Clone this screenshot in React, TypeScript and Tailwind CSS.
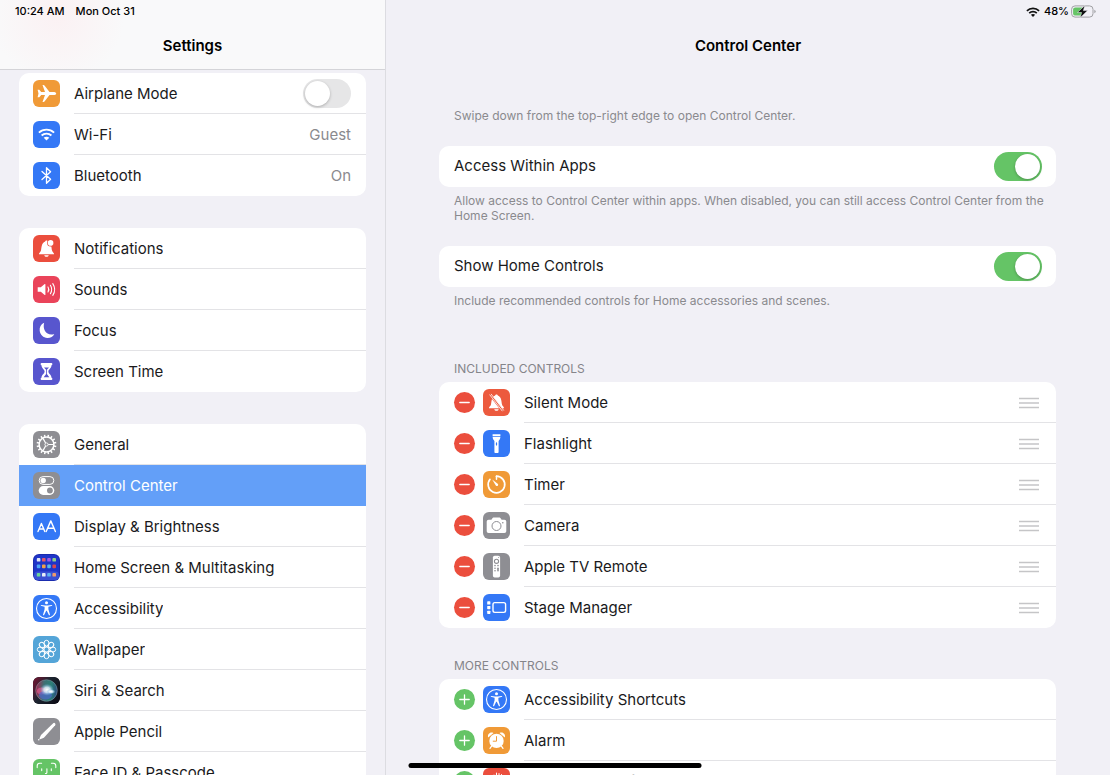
import { useId, useState, type ReactNode } from "react";
import clsx from "clsx";

/* Glyphs share a 27x27 box, the size of the coloured tile behind them */

const PERSON = (
  <>
    <circle cx="13.5" cy="13.5" r="10" fill="none" stroke="#fff" strokeWidth="1.1" />
    <circle cx="13.5" cy="7.7" r="1.5" />
    <path d="M8.3 9.9 L12.2 10.5 H14.8 L18.7 9.9 Q19.4 10 19.2 10.7 L15.4 11.7 V14.2 L17 19.8 Q16.7 20.6 16 20.2 L13.8 15.7 H13.2 L11 20.2 Q10.3 20.6 10 19.8 L11.6 14.2 V11.7 L7.8 10.7 Q7.6 10 8.3 9.9 Z" />
  </>
);

const BELL =
  "M6 19.3 C5.6 18.2 7.6 17.4 8 15.6 C8.6 13 8.2 8 12.2 6.5 C12.4 5.3 14.6 5.3 14.8 6.5 C18.8 8 18.4 13 19 15.6 C19.4 17.4 21.4 18.2 21 19.3 Z M11.3 20.2 H15.7 C15.4 22.3 11.6 22.3 11.3 20.2 Z";

const APP_COLORS = [
  "#dfe6f5", "#e0596c", "#a35bea", "#8fd08a",
  "#4ba5f5", "#f0a04a", "#5cb9e8", "#d8484f",
  "#6bd49a", "#e8eef8", "#5fb4f2", "#ef9a6b",
];

const ring = [0, 1, 2, 3, 4, 5, 6, 7];
const teeth = Array.from({ length: 16 }, (_, i) => i);

const GLYPHS = {
  airplane: (
    <path d="M23.2 13.5 C23.2 12.5 21.8 12 20.4 12 H16.5 L11.5 5.4 Q11.1 5 10.5 5 H9.5 L12 12 H8.2 L6.3 9.7 H4.6 L5.5 13.5 L4.6 17.3 H6.3 L8.2 15 H12 L9.5 22 H10.5 Q11.1 22 11.5 21.6 L16.5 15 H20.4 C21.8 15 23.2 14.5 23.2 13.5 Z" />
  ),
  wifi: (
    <>
      <g fill="none" stroke="#fff" strokeWidth="1.8">
        <path d="M5.9 11.6 C10.1 7.5 16.9 7.5 21.1 11.6" />
        <path d="M8.6 14.5 C11.3 11.9 15.7 11.9 18.4 14.5" />
      </g>
      <path d="M13.5 19.6 L10.7 16.8 C12.3 15.4 14.7 15.4 16.3 16.8 Z" />
    </>
  ),
  bluetooth: (
    <path d="M9 9.5 L17.6 17.3 L13.5 21.3 V5.7 L17.6 9.7 L9 17.5" fill="none" stroke="#fff" strokeWidth="1.3" strokeLinejoin="round" strokeLinecap="round" />
  ),
  bellBadge: (
    <>
      <path d={BELL} />
      <circle cx="17.6" cy="7.9" r="3.5" fill="#eb4e3d" />
      <circle cx="17.6" cy="7.9" r="2.8" />
    </>
  ),
  speaker: (
    <>
      <path d="M4.7 11.3 H7.8 L11.7 8 Q12.4 7.6 12.4 8.5 V18.5 Q12.4 19.4 11.7 19 L7.8 15.8 H4.7 Z" />
      <g fill="none" stroke="#fff" strokeWidth="1.1" strokeLinecap="round">
        <path d="M15 11 Q16.6 13.5 15 16" />
        <path d="M17.4 9.3 Q20 13.5 17.4 17.7" />
        <path d="M19.8 7.6 Q23.6 13.5 19.8 19.4" />
      </g>
    </>
  ),
  moon: <path d="M11.2 5.8 C7.9 7.2 6.3 10.4 6.7 13.8 C7.2 17.8 10.4 20.9 14.3 21 C17.5 21.1 20.1 19.5 21.3 16.9 C17.5 18.2 13.8 17 12 13.9 C10.6 11.5 10.4 8.6 11.2 5.8 Z" />,
  hourglass: (
    <>
      <path d="M8.5 5 H18.5 Q19.3 5 19.3 5.8 V6.5 Q19.3 7.2 18.5 7.2 C18.5 10.4 15.4 11.2 15.4 13.5 C15.4 15.8 18.5 16.6 18.5 19.8 Q19.3 19.8 19.3 20.5 V21.3 Q19.3 22 18.5 22 H8.5 Q7.7 22 7.7 21.3 V20.5 Q7.7 19.8 8.5 19.8 C8.5 16.6 11.6 15.8 11.6 13.5 C11.6 11.2 8.5 10.4 8.5 7.2 Q7.7 7.2 7.7 6.5 V5.8 Q7.7 5 8.5 5 Z" />
      <path d="M11 9.4 H16 L13.9 11.8 V16 L16.3 19.3 H10.7 L13.1 16 V11.8 Z" fill="#5856ce" />
    </>
  ),
  gear: (
    <g fill="none" stroke="#fff">
      <circle cx="13.5" cy="13.5" r="7.4" strokeWidth="1.5" />
      {teeth.map((i) => (
        <path key={i} d="M13.5 5.9 V3.6" strokeWidth="1.5" transform={`rotate(${i * 22.5 + 11} 13.5 13.5)`} />
      ))}
      <circle cx="13.5" cy="13.5" r="1.6" strokeWidth="0.9" />
      <path d="M15.2 13.5 H20.5 M12.6 12 L10 7.4 M12.6 15 L10 19.6" strokeWidth="1.2" />
    </g>
  ),
  toggles: (
    <>
      <rect x="6.2" y="4.6" width="14.6" height="7.8" rx="3.9" fill="none" stroke="#fff" strokeWidth="1" />
      <circle cx="10.2" cy="8.5" r="2.7" />
      <rect x="5.7" y="14.1" width="15.6" height="8.8" rx="4.4" />
      <circle cx="16.9" cy="18.5" r="2.9" fill="#8e8e93" />
    </>
  ),
  textSize: (
    <g fill="none" stroke="#fff" strokeWidth="1.4" strokeLinecap="round" strokeLinejoin="round">
      <path d="M5 18.5 L8.4 10.5 L11.8 18.5 M6.1 16 H10.7" />
      <path d="M13.2 18.5 L17.8 7.9 L22.4 18.5 M14.7 15.2 H20.9" />
    </g>
  ),
  appGrid: (
    <>
      <rect x="1" y="1" width="25" height="25" rx="5" fill="#1f35c8" />
      <rect x="1" y="17.6" width="25" height="8.4" rx="4" fill="#3a50d4" />
      {APP_COLORS.map((color, i) => (
        <rect key={i} x={3.8 + (i % 4) * 5.2} y={[4, 10.6, 19][Math.floor(i / 4)]} width="3.6" height="3.6" rx="0.9" fill={color} />
      ))}
    </>
  ),
  person: PERSON,
  flower: (
    <g fill="none" stroke="#fff" strokeWidth="1">
      {ring.map((i) => (
        <ellipse key={i} cx="13.5" cy="7.2" rx="2.5" ry="2.9" transform={`rotate(${i * 45} 13.5 13.5)`} />
      ))}
      <circle cx="13.5" cy="13.5" r="2.6" />
      {ring.map((i) => (
        <path key={i} d="M13.5 11.2 L12 8.8 M13.5 11.2 L15 8.8" strokeWidth="0.7" transform={`rotate(${i * 45} 13.5 13.5)`} />
      ))}
    </g>
  ),
  siri: (
    <>
      <defs>
        <linearGradient id="siri-back" x1="0" y1="0.2" x2="1" y2="0.8">
          <stop offset="0" stopColor="#6b1631" />
          <stop offset="0.4" stopColor="#1c2430" />
          <stop offset="1" stopColor="#0c0c16" />
        </linearGradient>
        <linearGradient id="siri-orb" x1="0" y1="0.5" x2="1" y2="0.6">
          <stop offset="0" stopColor="#a3284f" />
          <stop offset="0.35" stopColor="#3f6f73" />
          <stop offset="0.7" stopColor="#2b8078" />
          <stop offset="1" stopColor="#2c4a80" />
        </linearGradient>
        <radialGradient id="siri-glow">
          <stop offset="0" stopColor="#fff" />
          <stop offset="0.45" stopColor="#dcecf8" stopOpacity="0.85" />
          <stop offset="1" stopColor="#6fb0e6" stopOpacity="0" />
        </radialGradient>
      </defs>
      <rect width="27" height="27" rx="6" fill="url(#siri-back)" />
      <circle cx="13.5" cy="13.5" r="10.8" fill="url(#siri-orb)" stroke="#8a9cab" strokeWidth="0.5" />
      <ellipse cx="8.5" cy="14" rx="4.6" ry="3.6" fill="#e0588c" opacity="0.7" />
      <ellipse cx="12.5" cy="18.2" rx="6.5" ry="4.2" fill="#4d68cc" opacity="0.7" />
      <ellipse cx="14" cy="12.8" rx="7" ry="6" fill="url(#siri-glow)" />
      <ellipse cx="18" cy="14.6" rx="4.5" ry="2.6" fill="url(#siri-glow)" />
    </>
  ),
  pencil: (
    <>
      <path d="M20.2 5.2 Q21.1 4.5 22 5.2 Q22.9 6.2 22.2 7.3 L10.9 19.8 L7.2 21.3 L6.4 20.6 L8 16.9 Z" />
      <circle cx="5.8" cy="21.7" r="0.8" />
    </>
  ),
  face: (
    <g fill="none" stroke="#fff" strokeWidth="1.1" strokeLinecap="round">
      <path d="M4.2 8.6 V6.8 Q4.2 4.2 6.8 4.2 H8.6 M18.4 4.2 H20.2 Q22.8 4.2 22.8 6.8 V8.6 M22.8 18.4 V20.2 Q22.8 22.8 20.2 22.8 H18.4 M8.6 22.8 H6.8 Q4.2 22.8 4.2 20.2 V18.4" />
      <path d="M8.7 9.8 V11.6 M18.3 9.8 V11.6 M13.9 9.8 V13.6 Q13.9 14.6 12.4 14.5 M9.2 17.6 Q13.5 21 17.8 17.6" />
    </g>
  ),
  bellSlash: (
    <>
      <path d={BELL} />
      <path d="M6.8 5.2 L20.2 22.6" stroke="#ec5a3e" strokeWidth="2.4" />
      <path d="M8 4.9 L20.8 21.5 M6.6 5.6 L19.4 22.2" stroke="#fff" strokeWidth="0.8" />
    </>
  ),
  flashlight: (
    <>
      <path d="M9.6 4.3 H17.4 V6.2 H9.6 Z M9.6 6.9 H17.4 Q17.4 9.3 15.6 10.9 V22 Q15.6 22.9 14.8 22.9 H12.2 Q11.4 22.9 11.4 22 V10.9 Q9.6 9.3 9.6 6.9 Z" />
      <rect x="12.9" y="12.3" width="1.2" height="3.2" rx="0.6" fill="#3478f6" />
    </>
  ),
  timer: (
    <>
      <path d="M13.5 5.2 A8.3 8.3 0 1 1 7 8.3" fill="none" stroke="#fff" strokeWidth="1.7" strokeLinecap="round" />
      <path d="M13.5 5.2 V8.3" stroke="#fff" strokeWidth="1.5" strokeLinecap="round" />
      <path d="M9.2 8.5 L15 13 Q15.6 14.3 14.6 14.9 Q13.5 15.3 12.8 14.4 Z" />
    </>
  ),
  camera: (
    <>
      <path d="M5.6 7.8 H8.4 L9.6 5.9 Q9.8 5.6 10.3 5.6 H16.7 Q17.2 5.6 17.4 5.9 L18.6 7.8 H21.4 Q23.3 7.8 23.3 9.6 V19.3 Q23.3 21.1 21.4 21.1 H5.6 Q3.7 21.1 3.7 19.3 V9.6 Q3.7 7.8 5.6 7.8 Z" />
      <circle cx="13.5" cy="14" r="4.5" fill="none" stroke="#8e8e93" strokeWidth="1" />
      <circle cx="19.8" cy="10.7" r="0.8" fill="#8e8e93" />
    </>
  ),
  remote: (
    <>
      <rect x="9.9" y="2.8" width="7.2" height="21.8" rx="1.8" />
      <circle cx="13.5" cy="8.3" r="2.1" fill="none" stroke="#8e8e93" strokeWidth="1.1" />
      <g fill="#8e8e93">
        <circle cx="15.7" cy="4.5" r="0.5" />
        <circle cx="12" cy="12.6" r="0.8" />
        <circle cx="15" cy="12.6" r="0.8" />
        <circle cx="12" cy="15.2" r="0.8" />
        <circle cx="12" cy="17.8" r="0.8" />
        <rect x="14.2" y="14.4" width="1.6" height="4.2" rx="0.8" />
      </g>
    </>
  ),
  stage: (
    <>
      <rect x="4.2" y="7.3" width="3.2" height="3.2" rx="0.6" />
      <rect x="4.2" y="12" width="3.2" height="3.2" rx="0.6" />
      <rect x="4.2" y="16.7" width="3.2" height="3.2" rx="0.6" />
      <rect x="10" y="8.6" width="12.6" height="9.8" rx="1.8" fill="none" stroke="#fff" strokeWidth="1.4" />
    </>
  ),
  alarm: (
    <>
      <circle cx="13.5" cy="13.9" r="7.2" />
      <path d="M5.2 10.6 C4 7.2 7.4 4.4 10.5 6.1 Z M21.8 10.6 C23 7.2 19.6 4.4 16.5 6.1 Z" />
      <path d="M8.6 19.2 L7 21.3 M18.4 19.2 L20 21.3" stroke="#fff" strokeWidth="1.3" strokeLinecap="round" />
      <path d="M13.5 9.6 V14.2 H10.2" fill="none" stroke="#f09a37" strokeWidth="1" strokeLinecap="round" />
    </>
  ),
  announce: (
    <path d="M11 10 V7 M13.5 10 V5 M16 10 V5.5 M18.5 10 V6.5 M8 13 H19 M8 17 H19" fill="none" stroke="#fff" strokeWidth="1.1" strokeLinecap="round" />
  ),
} satisfies Record<string, ReactNode>;

type Item = {
  label: string;
  glyph: keyof typeof GLYPHS;
  tile: string;
  value?: string;
  toggle?: boolean;
};

const BLUE = "bg-[#3478f6]";
const GRAY = "bg-[#8e8e93]";
const ORANGE = "bg-[#f09a37]";
const RED = "bg-[#eb4e3d]";
const INDIGO = "bg-[#5856ce]";

const SIDEBAR: Item[][] = [
  [
    { label: "Airplane Mode", glyph: "airplane", tile: ORANGE, toggle: true },
    { label: "Wi-Fi", glyph: "wifi", tile: BLUE, value: "Guest" },
    { label: "Bluetooth", glyph: "bluetooth", tile: BLUE, value: "On" },
  ],
  [
    { label: "Notifications", glyph: "bellBadge", tile: RED },
    { label: "Sounds", glyph: "speaker", tile: "bg-[#ea445a]" },
    { label: "Focus", glyph: "moon", tile: INDIGO },
    { label: "Screen Time", glyph: "hourglass", tile: INDIGO },
  ],
  [
    { label: "General", glyph: "gear", tile: GRAY },
    { label: "Control Center", glyph: "toggles", tile: GRAY },
    { label: "Display & Brightness", glyph: "textSize", tile: BLUE },
    { label: "Home Screen & Multitasking", glyph: "appGrid", tile: "bg-[#1a2cae]" },
    { label: "Accessibility", glyph: "person", tile: BLUE },
    { label: "Wallpaper", glyph: "flower", tile: "bg-[#54a5d8]" },
    { label: "Siri & Search", glyph: "siri", tile: "bg-[#14141c]" },
    { label: "Apple Pencil", glyph: "pencil", tile: GRAY },
    { label: "Face ID & Passcode", glyph: "face", tile: "bg-[#65c466]" },
  ],
];

const INCLUDED: Item[] = [
  { label: "Silent Mode", glyph: "bellSlash", tile: "bg-[#ec5a3e]" },
  { label: "Flashlight", glyph: "flashlight", tile: BLUE },
  { label: "Timer", glyph: "timer", tile: ORANGE },
  { label: "Camera", glyph: "camera", tile: GRAY },
  { label: "Apple TV Remote", glyph: "remote", tile: GRAY },
  { label: "Stage Manager", glyph: "stage", tile: BLUE },
];

const MORE: Item[] = [
  { label: "Accessibility Shortcuts", glyph: "person", tile: BLUE },
  { label: "Alarm", glyph: "alarm", tile: ORANGE },
  { label: "Announce Notifications", glyph: "announce", tile: RED },
];

function Tile({ glyph, tile }: Pick<Item, "glyph" | "tile">) {
  return (
    <span className={clsx("size-[27px] shrink-0 overflow-hidden rounded-md", tile)}>
      <svg viewBox="0 0 27 27" className="size-full" fill="#fff" aria-hidden="true">
        {GLYPHS[glyph]}
      </svg>
    </span>
  );
}

function Toggle({ id, defaultChecked }: { id: string; defaultChecked?: boolean }) {
  return (
    <input
      id={id}
      type="checkbox"
      role="switch"
      defaultChecked={defaultChecked}
      className="flex h-[29px] w-12 shrink-0 cursor-pointer appearance-none items-center rounded-full bg-[#e6e6e7] p-0.5 before:size-[25px] before:rounded-full before:bg-white before:shadow-[0_1px_3px_rgba(0,0,0,0.25)] checked:justify-end checked:bg-[#65c466]"
    />
  );
}

function SidebarRow({ item, selected, onSelect }: { item: Item; selected: boolean; onSelect: () => void }) {
  const id = useId();
  const body = (
    <>
      <Tile glyph={item.glyph} tile={item.tile} />
      <span
        className={clsx(
          "flex h-full min-w-0 flex-1 items-center justify-between border-b pr-[15px]",
          selected ? "border-transparent" : "border-[#e3e3e6] group-last:border-transparent",
        )}
      >
        {item.toggle ? (
          <>
            <label htmlFor={id} className="pt-0.5">
              {item.label}
            </label>
            <Toggle id={id} />
          </>
        ) : (
          <>
            <span className="truncate pt-0.5">{item.label}</span>
            {item.value && <span className="pt-0.5 text-[#8a8a8e]">{item.value}</span>}
          </>
        )}
      </span>
    </>
  );
  const row = "flex h-[41px] w-full items-center gap-3.5 pl-3.5 text-left";

  return (
    <li className={clsx("group", selected && "bg-[#639ff8] text-white")}>
      {item.toggle ? (
        <div className={row}>{body}</div>
      ) : (
        <button type="button" onClick={onSelect} aria-current={selected ? "page" : undefined} className={row}>
          {body}
        </button>
      )}
    </li>
  );
}

function ControlRow({ item, included }: { item: Item; included?: boolean }) {
  return (
    <li className="group flex h-[41px] items-center pl-[15px]">
      <button
        type="button"
        aria-label={`${included ? "Remove" : "Insert"} ${item.label}`}
        className={clsx("mr-2 size-[21px] shrink-0 rounded-full", included ? "bg-[#eb4e3d]" : "bg-[#65c466]")}
      >
        <svg viewBox="0 0 21 21" className="size-full" stroke="#fff" strokeWidth="1.3" strokeLinecap="round" aria-hidden="true">
          <path d={included ? "M5.8 10.5 H15.2" : "M5.8 10.5 H15.2 M10.5 5.8 V15.2"} />
        </svg>
      </button>
      <Tile glyph={item.glyph} tile={item.tile} />
      <span className="ml-3.5 flex h-full min-w-0 flex-1 items-center justify-between border-b border-[#e3e3e6] pt-0.5 pr-[17px] group-last:border-transparent">
        {item.label}
        {included && (
          <svg viewBox="0 0 20 12" className="h-3 w-5" stroke="#c5c5c7" strokeWidth="1.3" aria-hidden="true">
            <path d="M0 1.5 H20 M0 6 H20 M0 10.5 H20" />
          </svg>
        )}
      </span>
    </li>
  );
}

function SwitchCard({ label, note }: { label: string; note: string }) {
  const id = useId();
  return (
    <section>
      <div className="flex h-[41px] items-center justify-between rounded-[10px] bg-white pr-3.5 pl-[15px]">
        <label htmlFor={id}>{label}</label>
        <Toggle id={id} defaultChecked />
      </div>
      <p className="mt-1.5 pr-2 pl-[15px] text-xs leading-[15px] text-[#8a8a8e]">{note}</p>
    </section>
  );
}

function ControlSection({ title, items, included }: { title: string; items: Item[]; included?: boolean }) {
  return (
    <section>
      <h2 className="px-[15px] text-xs leading-[15px] text-[#85858a] uppercase">{title}</h2>
      <ul className="mt-1.5 overflow-hidden rounded-[10px] bg-white">
        {items.map((item) => (
          <ControlRow key={item.label} item={item} included={included} />
        ))}
      </ul>
    </section>
  );
}

function DeviceStatus() {
  return (
    <div className="flex h-[23px] items-center justify-end gap-1 pr-3.5 text-[11px] font-medium">
      <svg viewBox="0 0 14 10" className="h-2.5 w-3.5" aria-label="Wi-Fi">
        <g fill="none" stroke="#111" strokeWidth="1.7">
          <path d="M0.9 3.8 C4.3 0.5 9.7 0.5 13.1 3.8" />
          <path d="M3.2 6.2 C5.3 4.2 8.7 4.2 10.8 6.2" />
        </g>
        <path d="M7 9.9 L4.9 7.8 C6.1 6.8 7.9 6.8 9.1 7.8 Z" fill="#111" />
      </svg>
      48%
      <svg viewBox="0 0 25 13" className="-ml-0.5 h-[13px] w-[25px]" aria-label="Charging">
        <rect x="0.6" y="0.9" width="21.4" height="11.2" rx="3.4" fill="none" stroke="#a0a0a4" />
        <path d="M4.3 2.4 H11 V10.6 H4.3 Q2.1 10.6 2.1 8.4 V4.6 Q2.1 2.4 4.3 2.4 Z" fill="#65c466" />
        <path d="M23.3 4.7 Q24.7 5.4 24.7 6.5 Q24.7 7.6 23.3 8.3 Z" fill="#a0a0a4" />
        <path d="M13.8 0.4 L6.4 7.5 H10.6 L9.2 12.8 L16.6 5.6 H12.4 Z" fill="#111" stroke="#f1f0f6" strokeWidth="0.5" />
      </svg>
    </div>
  );
}

export default function App() {
  const [selected, setSelected] = useState("Control Center");

  return (
    <div className="relative flex h-screen overflow-hidden bg-[#f1f0f6] font-['Inter','Liberation_Sans',sans-serif] text-[15px] text-[#1a1a1c]">
      <aside className="flex w-[35%] max-w-[386px] min-w-[320px] shrink-0 grow flex-col border-r border-[#dcdce1]">
        <header className="h-[70px] shrink-0 border-b border-[#d4d4d8] bg-[#f9f9fa] bg-radial-[circle_at_58px_16px] from-[#fbf1f3] to-[#f9f9fa] to-20% text-black">
          <div className="flex h-[23px] items-center gap-[11px] pl-[15px] text-[11px] font-medium">
            <span>10:24 AM</span>
            <span>Mon Oct 31</span>
          </div>
          <h1 className="pt-[13px] text-center leading-5 font-semibold">Settings</h1>
        </header>
        <nav aria-label="Settings" className="flex flex-1 flex-col gap-8 overflow-y-auto px-[19px] pt-[3px] [scrollbar-width:none]">
          {SIDEBAR.map((group) => (
            <ul key={group[0].label} className="shrink-0 overflow-hidden rounded-[10px] bg-white">
              {group.map((item) => (
                <SidebarRow
                  key={item.label}
                  item={item}
                  selected={item.label === selected}
                  onSelect={() => setSelected(item.label)}
                />
              ))}
            </ul>
          ))}
        </nav>
      </aside>

      <main className="flex min-w-0 flex-1 flex-col">
        <header className="h-[70px] shrink-0 text-black">
          <DeviceStatus />
          <h1 className="pt-[13px] text-center leading-5 font-semibold">Control Center</h1>
        </header>
        <div className="flex-1 overflow-y-auto pt-[38px] pr-[54px] pl-[53px] [scrollbar-width:none]">
          <p className="mb-[23px] px-[15px] text-xs leading-[15px] text-[#8a8a8e]">
            Swipe down from the top-right edge to open Control Center.
          </p>
          <div className="flex flex-col gap-[23px]">
            <SwitchCard
              label="Access Within Apps"
              note="Allow access to Control Center within apps. When disabled, you can still access Control Center from the Home Screen."
            />
            <SwitchCard label="Show Home Controls" note="Include recommended controls for Home accessories and scenes." />
          </div>
          <div className="mt-[53px] flex flex-col gap-[30px]">
            <ControlSection title="Included Controls" items={INCLUDED} included />
            <ControlSection title="More Controls" items={MORE} />
          </div>
        </div>
      </main>

      {/* Home indicator floats over both panes */}
      <div className="absolute bottom-[7px] left-1/2 h-[5px] w-[293px] -translate-x-1/2 rounded-full bg-black" />
    </div>
  );
}
